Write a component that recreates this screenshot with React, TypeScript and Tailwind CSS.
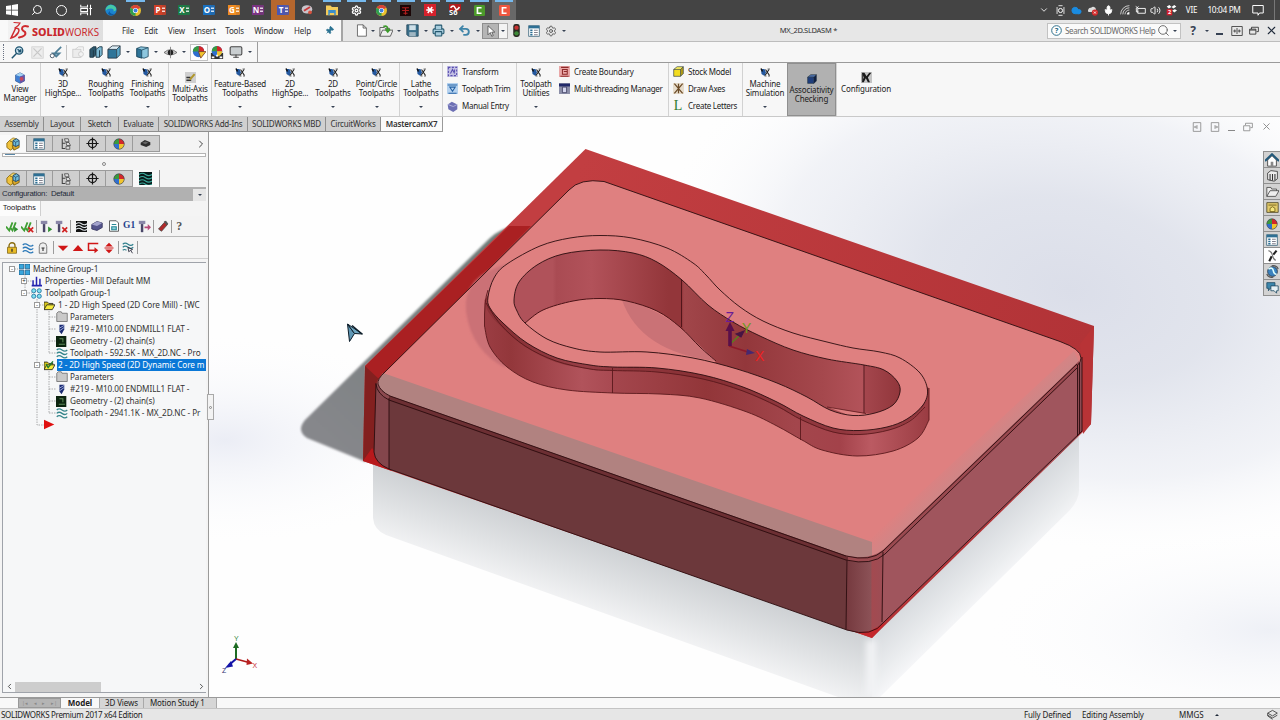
import type { ReactNode } from "react";
import {
  ChevronDown,
  ChevronRight,
  ChevronLeft,
  Cloud,
  Mic,
  Monitor,
  Pin,
  Printer,
  Search,
  Settings,
  Undo2,
  Volume2,
  X,
} from "lucide-react";

type Pt = [number, number];

// Catmull-Rom through the points, emitted as cubic beziers
function smooth(pts: Pt[], closed = false) {
  const n = pts.length;
  const at = (i: number) =>
    closed ? pts[(i + n) % n] : pts[Math.max(0, Math.min(n - 1, i))];
  let d = `M${pts[0][0]} ${pts[0][1]}`;
  const last = closed ? n : n - 1;
  for (let i = 0; i < last; i++) {
    const [p0, p1, p2, p3] = [at(i - 1), at(i), at(i + 1), at(i + 2)];
    d += `C${(p1[0] + (p2[0] - p0[0]) / 6).toFixed(1)} ${(p1[1] + (p2[1] - p0[1]) / 6).toFixed(1)} ${(p2[0] - (p3[0] - p1[0]) / 6).toFixed(1)} ${(p2[1] - (p3[1] - p1[1]) / 6).toFixed(1)} ${p2[0]} ${p2[1]}`;
  }
  return closed ? d + "Z" : d;
}

const ringOuter: Pt[] = [
  [488, 297], [494, 278], [507, 264], [540, 246], [570, 238], [600, 235.5], [632, 238], [667, 248],
  [693, 263], [706, 275], [720, 290], [740, 307], [763, 321], [793, 333], [827, 342], [853, 348],
  [880, 352], [900, 358], [920, 373], [927.5, 390], [923, 405], [907, 419], [887, 427], [860, 430.5],
  [833, 428], [803, 416], [777, 402], [743, 387], [703, 375], [657, 368], [613, 367], [590, 365],
  [557, 358], [527, 343], [503, 323], [490, 308],
];

const ringInner: Pt[] = [
  [514, 300], [519, 282], [537, 265], [563, 254], [600, 250], [633, 253], [657, 262], [682, 280],
  [708, 305], [733, 322], [760, 336], [793, 350], [827, 359], [864, 365], [884, 370], [897, 381],
  [900, 392], [893, 405], [875, 413], [853, 415.5], [830, 410], [807, 397], [777, 383], [737, 369],
  [693, 358], [647, 352], [600, 352], [573, 348], [547, 339], [525, 323], [517, 311],
];

const ringFoot: Pt[] = [
  [484.5, 326], [490, 347], [507, 367], [533, 382], [567, 390], [613, 393], [660, 394], [700, 398],
  [747, 412], [777, 426], [802, 440], [822, 450], [857, 456], [893, 451], [918, 438], [929, 420],
];

const floorEdge: Pt[] = [
  [525, 323], [543, 310], [573, 301], [600, 298.5], [627, 301], [657, 311], [680, 327], [700, 347], [716, 361],
];

const outerPath = smooth(ringOuter, true);
const innerPath = smooth(ringInner, true);

function Scene() {
  return (
    <svg className="absolute inset-0" width="1280" height="580" viewBox="0 117 1280 580">
      <defs>
        <radialGradient id="haze" gradientUnits="userSpaceOnUse" cx="0" cy="0" r="1" gradientTransform="translate(1070 290) rotate(12) scale(420 260)">
          <stop offset="0" stopColor="#dbdee9" />
          <stop offset="0.35" stopColor="#e0e3ec" stopOpacity="0.95" />
          <stop offset="0.7" stopColor="#eceef4" stopOpacity="0.7" />
          <stop offset="1" stopColor="#ffffff" stopOpacity="0" />
        </radialGradient>
        <radialGradient id="haze2" gradientUnits="userSpaceOnUse" cx="0" cy="0" r="1" gradientTransform="translate(225 440) scale(240 110)">
          <stop offset="0" stopColor="#ebedf5" />
          <stop offset="1" stopColor="#ffffff" stopOpacity="0" />
        </radialGradient>
        <radialGradient id="haze3" gradientUnits="userSpaceOnUse" cx="0" cy="0" r="1" gradientTransform="translate(1270 630) scale(300 110)">
          <stop offset="0" stopColor="#eef0f6" />
          <stop offset="1" stopColor="#ffffff" stopOpacity="0" />
        </radialGradient>
        <linearGradient id="reflFront" gradientUnits="userSpaceOnUse" x1="620" y1="548" x2="592" y2="628">
          <stop offset="0" stopColor="#cdd0d3" />
          <stop offset="0.45" stopColor="#e1e3e5" />
          <stop offset="1" stopColor="#fbfbfc" />
        </linearGradient>
        <linearGradient id="reflRight" gradientUnits="userSpaceOnUse" x1="980" y1="530" x2="1022" y2="575">
          <stop offset="0" stopColor="#d6d9dd" />
          <stop offset="0.6" stopColor="#ebedef" />
          <stop offset="1" stopColor="#fbfbfd" />
        </linearGradient>
        <linearGradient id="stock" gradientUnits="userSpaceOnUse" x1="586" y1="150" x2="1090" y2="330">
          <stop offset="0" stopColor="#c23e41" />
          <stop offset="1" stopColor="#b23337" />
        </linearGradient>
        <linearGradient id="wall" gradientUnits="userSpaceOnUse" x1="514" y1="0" x2="900" y2="0">
          <stop offset="0" stopColor="#b0525a" />
          <stop offset="0.1" stopColor="#b0525a" />
          <stop offset="0.11" stopColor="#a94b53" />
          <stop offset="0.2" stopColor="#b2525a" />
          <stop offset="0.4" stopColor="#93363a" />
          <stop offset="0.435" stopColor="#93363a" />
          <stop offset="0.44" stopColor="#a1464a" />
          <stop offset="0.6" stopColor="#93373b" />
          <stop offset="0.8" stopColor="#a5484d" />
          <stop offset="0.905" stopColor="#b3535a" />
          <stop offset="0.91" stopColor="#a4464d" />
          <stop offset="1" stopColor="#91363b" />
        </linearGradient>
        <linearGradient id="side" gradientUnits="userSpaceOnUse" x1="484" y1="0" x2="929" y2="0">
          <stop offset="0" stopColor="#9b3d43" />
          <stop offset="0.06" stopColor="#93373b" />
          <stop offset="0.22" stopColor="#b1535b" />
          <stop offset="0.285" stopColor="#a94a52" />
          <stop offset="0.29" stopColor="#a4464d" />
          <stop offset="0.5" stopColor="#923639" />
          <stop offset="0.7" stopColor="#a3464c" />
          <stop offset="0.8" stopColor="#a3424a" />
          <stop offset="0.87" stopColor="#bb5a62" />
          <stop offset="1" stopColor="#9a3c42" />
        </linearGradient>
        <linearGradient id="corner" gradientUnits="userSpaceOnUse" x1="846" y1="0" x2="884" y2="0">
          <stop offset="0" stopColor="#75393e" />
          <stop offset="0.66" stopColor="#8c5257" />
          <stop offset="0.68" stopColor="#a34a50" />
          <stop offset="1" stopColor="#9c4d55" />
        </linearGradient>
        <linearGradient id="groundShade" gradientUnits="userSpaceOnUse" x1="500" y1="230" x2="320" y2="430">
          <stop offset="0" stopColor="#6f7a77" />
          <stop offset="1" stopColor="#86878b" />
        </linearGradient>
        <linearGradient id="rightBevel" gradientUnits="userSpaceOnUse" x1="965" y1="442" x2="985" y2="462">
          <stop offset="0" stopColor="#df8080" />
          <stop offset="1" stopColor="#c98889" />
        </linearGradient>
        <filter id="soft" x="-10%" y="-10%" width="120%" height="120%">
          <feGaussianBlur stdDeviation="1.3" />
        </filter>
        <filter id="soft2" x="-60%" y="-10%" width="220%" height="120%">
          <feGaussianBlur stdDeviation="3" />
        </filter>
        <clipPath id="pocket">
          <path d={innerPath} />
        </clipPath>
      </defs>

      <rect y="117" width="1280" height="580" fill="#fefefe" />
      <rect y="117" width="1280" height="580" fill="url(#haze)" />
      <rect y="117" width="1280" height="580" fill="url(#haze2)" />
      <rect y="117" width="1280" height="580" fill="url(#haze3)" />

      {/* reflection on the floor */}
      <path d="M373 462V518Q374 530 386 535L838 697H872V630Z" fill="url(#reflFront)" />
      <path d="M872 634V697H880L1068 512Q1079 501 1079 490V432Z" fill="url(#reflRight)" />
      <path d="M866 640H876V697H866Z" fill="#f2f3f5" filter="url(#soft2)" />

      {/* ground shadow */}
      <path d="M530 226Q506 223 490 238L305 420Q296 431 307 438L366 462V366Z" fill="url(#groundShade)" filter="url(#soft)" />

      {/* stock */}
      <path d="M585.500 149L1094 326L1091 424L872 638L363 461L365 366Z" fill="url(#stock)" />
      <path d="M509 226H531L385 373L375 384L365 366Z" fill="#aa2022" />
      <path d="M365 366L380 380L375 460L363 461Z" fill="#83201f" />
      <path d="M363 461L372 448L392 471Z" fill="#b8191c" />
      <path d="M852 631L872 638L886 623Z" fill="#c4262b" />
      <path d="M1094 326L1080 344L1083 434L1091 424Z" fill="#b83336" />

      {/* part sides */}
      <path d="M376 384L389 398V469Q376 463 374 454Z" fill="#84464c" />
      <path d="M389 397L847 558V630L389 469Z" fill="#6c383b" />
      <path d="M846 556L884 550V622Q874 632 860 632Q852 632 846 630Z" fill="url(#corner)" />
      <path d="M883 552L1077.500 366V437L883 623Z" fill="#a0555d" />
      <path d="M1077 366L1082 358V431L1077 437Z" fill="#8d4a52" />

      {/* part top */}
      <path
        d="M385 372L569 190Q580 178 604 181.500L1060 341.500Q1081 349 1081 358Q1081 363 1077 367L885 551Q875 561 846 557L389 397Q374 390 378 380Z"
        fill="#df8080"
      />
      <path d="M868 541L1074 351L1079 362L884 550Q876 557 868 558Z" fill="url(#rightBevel)" />
      <path d="M383 373L872 542V558Q858 560 846 556L390 396Q374 389 380 377Z" fill="#b18280" />
      <path d="M389 395.500L846 555.500V560.500L389 400.500Z" fill="#6c2f33" />
      <path d="M377 382Q379 390 389 395.500V400.500Q379 396 376 385Z" fill="#8c4a4f" />
      <path d="M846 555.500Q870 561 884 549L1079 361L1079 367L885 553Q872 565 846 560.500Z" fill="#9a4a50" />

      {/* cast shade left of the boss */}
      <path d="M507 264Q462 276 466 312Q472 352 506 368L500 320Z" fill="#cb7176" filter="url(#soft)" />

      <g fill="none" stroke="#2a0c0e" strokeWidth="0.9">
        <path d="M569 190Q580 178 604 181.500L1060 341.500Q1081 349 1081 358Q1081 362 1077 366" />
        <path d="M569 190L385 372Q377 379 378 384Q380 391 390 396L846 556Q871 562 883 551L1077 364" />
        <path d="M376 384Q377 394 389 400L846 560Q872 566 885 554L1077 368" />
        <path d="M389 398V469M376 383L374 452Q375 463 389 469L847 630Q872 638 884 622L1082 431V357" />
        <path d="M847 557L846 629M883 552L882 622M1077.500 365V436M1079.500 363V434" />
      </g>

      {/* boss */}
      <path d={smooth(ringFoot) + "L929 388L880 370L613 350L500 280L484.500 300Z"} fill="url(#side)" />
      <path d={outerPath} fill="#7e2a2f" transform="translate(-1.500 4)" opacity="0.5" />
      <path d={outerPath} fill="#df8080" />
      <path d={innerPath} fill="url(#wall)" />
      <g clipPath="url(#pocket)">
        <path d={smooth(floorEdge) + "L700 375H540L510 340Z"} fill="#df8080" />
        <path d="M622 300Q650 305 680 327L716 361Q640 352 622 300Z" fill="#ca7276" />
        <path d={smooth(floorEdge)} fill="none" stroke="#4a1216" />
        <path d="M828 407L864 413.500L874 414L853 417Z" fill="#df8080" />
        <path d="M827 407L866 413.500" stroke="#5a181c" strokeWidth="0.8" />
        <path d="M681.500 278V327M864 364V413" stroke="#4a1216" strokeWidth="0.9" />
      </g>
      <g fill="none" stroke="#2a0c0e" strokeWidth="0.9">
        <path d={outerPath} />
        <path d={innerPath} />
        <path d={"M488 290Q484 300 484.500 326" + smooth(ringFoot).replace("M", "L") + "V388"} stroke="#5a181c" />
        <path
          d={smooth([[486, 303], [501, 325], [525, 346], [556, 361], [590, 369], [613, 370.5], [657, 372], [703, 379], [743, 391], [777, 406], [802, 420], [833, 432], [860, 434.5], [889, 430], [910, 421], [925, 407]])}
          stroke="#5a181c"
        />
        <path d="M612.500 368V393M800.500 417V440" stroke="#5a181c" />
      </g>

      {/* part origin */}
      <g strokeWidth="1.2" fill="none">
        <path d="M729 346L748 352" stroke="#8d1a2a" strokeWidth="1.600" />
        <path d="M729 345L741 334" stroke="#59801b" strokeWidth="1.400" />
        <path d="M747 349L755 353L746 355Z" fill="#47286f" />
        <path d="M736 334L744 331L741 337Z" fill="#481443" stroke="#481443" />
        <path d="M730 346V328" stroke="#5a0f4a" strokeWidth="3.600" />
        <path d="M725.500 331L730 322L734.500 331Z" fill="#5a0f4a" />
      </g>
      <g fontFamily='"Liberation Sans", sans-serif' fontSize="14">
        <text x="725.500" y="321.500" fill="#6a1c96">Z</text>
        <text x="742" y="332.500" fill="#6d9a1e">Y</text>
        <text x="755" y="361" fill="#f0201f">X</text>
      </g>

      {/* view triad */}
      <path d="M236 659V646" stroke="#1d6b22" strokeWidth="2" />
      <path d="M233 648L236 642L239 648Z" fill="#1d6b22" />
      <path d="M236 659L249 662.500" stroke="#b01a1a" strokeWidth="1.800" />
      <path d="M247 658.500L253 663.500L246.500 665Z" fill="#b92222" />
      <path d="M236 659L229 665" stroke="#1414a8" strokeWidth="2" />
      <path d="M231 661L225 668L233 666.500Z" fill="#1414a8" />
      <g fontFamily='"Liberation Sans", sans-serif' fontSize="7">
        <text x="234" y="641" fill="#3a8a3f">Y</text>
        <text x="252.500" y="667.500" fill="#c93030">X</text>
        <text x="222" y="672.500" fill="#303070">Z</text>
      </g>

      {/* mouse pointer */}
      <path d="M347.500 324L354.500 333.500L349.500 341.500Z" fill="#5f97b5" stroke="#0c1c28" strokeWidth="1" />
      <path d="M347.500 324L362.500 334L354.500 333.500Z" fill="#6fa6c0" stroke="#0c1c28" strokeWidth="1" />
      <path d="M352 325.500L362 334" stroke="#0c1c28" strokeWidth="1.500" />
    </svg>
  );
}

function Art({ s = 12, children }: { s?: number; children: ReactNode }) {
  return (
    <svg width={s} height={s} viewBox="0 0 16 16" className="shrink-0">
      {children}
    </svg>
  );
}

const Caret = () => (
  <span className="inline-block border-x-[2px] border-t-[2.5px] border-x-transparent border-t-gray-700" />
);

const Ball = ({ s = 13 }: { s?: number }) => (
  <Art s={s}>
    <circle cx="8" cy="8" r="7" fill="#2f6fd0" />
    <path d="M8 8L8 1A7 7 0 0 1 15 8Z" fill="#d3272b" />
    <path d="M8 8H15A7 7 0 0 1 8 15Z" fill="#f1c42d" />
    <path d="M8 8V1A7 7 0 0 0 1 8Z" fill="#3b9a3d" />
    <circle cx="8" cy="8" r="7" fill="none" stroke="#444" strokeWidth="0.8" />
  </Art>
);

const PartIcon = () => (
  <Art s={14}>
    <path d="M1 7L4 4L8 6V13L5 15L1 12Z" fill="#f0c23c" stroke="#8a6a12" />
    <path d="M4 4L8 1L12 2L8 6Z" fill="#f6d96a" stroke="#8a6a12" strokeWidth="0.800" />
    <path d="M7 10L15 9V12L9 15Z" fill="#dca92a" stroke="#7c600f" />
    <path d="M8 4L12 2L15 4V9L11 11L8 9Z" fill="#6fbcd8" stroke="#246" />
    <path d="M8 4L11 6L15 4M11 6V11" stroke="#246" strokeWidth="0.800" fill="none" />
  </Art>
);
const ListIcon = () => (
  <Art s={12}>
    <rect x="1" y="1" width="14" height="14" fill="#fff" stroke="#2d5b74" />
    <rect x="1" y="1" width="14" height="3.500" fill="#2d6f94" />
    <path d="M3 7H6M3 10H6M3 13H6" stroke="#2d6f94" strokeWidth="2" />
    <path d="M8 7H13M8 10H13M8 13H13" stroke="#556" />
  </Art>
);
const ConfigIcon = () => (
  <Art s={12}>
    <path d="M3 1V14H7M3 7H7" fill="none" stroke="#444" strokeWidth="1.400" />
    <path d="M6 1H11L12 5H7ZM8 6H12L14 10H9ZM8 11H13V15H8Z" fill="#ddd" stroke="#444" />
  </Art>
);
const TargetIcon = () => (
  <Art s={13}>
    <circle cx="8" cy="8" r="5" fill="none" stroke="#151515" strokeWidth="1.500" />
    <path d="M8 0.500V15.500M0.500 8H15.500" stroke="#151515" strokeWidth="1.500" />
  </Art>
);
const WaveIcon = () => (
  <Art s={13}>
    <rect width="16" height="16" fill="#0a1a1a" />
    <path d="M0 3Q4 0 8 3T16 3M0 7Q4 4 8 7T16 7M0 11Q4 8 8 11T16 11M0 15Q4 12 8 15T16 15" fill="none" stroke="#3aa99b" strokeWidth="1.400" />
  </Art>
);
const CubeIcon = ({ a, b, c, s = 13 }: { a: string; b: string; c: string; s?: number }) => (
  <Art s={s}>
    <path d="M1 5L6 1H15L11 5Z" fill={a} />
    <path d="M1 5H11V15H1Z" fill={b} />
    <path d="M11 5L15 1V11L11 15Z" fill={c} />
    <path d="M1 5L6 1H15V11L11 15H1ZM1 5H11V15M11 5L15 1" fill="none" stroke="#22323f" strokeWidth="0.900" />
  </Art>
);
const CamIcon = () => (
  <svg width="11" height="9" viewBox="0 0 22 18">
    <path d="M2 2H9L12 9L9 16L3 12Z" fill="#2459a0" />
    <path d="M2 1L5 7" stroke="#111" strokeWidth="3" />
    <path d="M11 3L19 15M18 3L10 15" stroke="#222" strokeWidth="2.200" />
    <path d="M15 2H20M9 16H13M16 16H20" stroke="#444" strokeWidth="1.500" />
  </svg>
);
const CamConfig = () => (
  <Art s={11}>
    <rect width="16" height="16" fill="#c4c4c4" />
    <path d="M1 1H5L8 6L12 1H15L10 8L13 15H10L7 9L4 15H1L4 8Z" fill="#1b1b1b" />
    <path d="M2 3V13" stroke="#333" strokeWidth="1.500" />
  </Art>
);

function Tile({ bg, letter }: { bg: string; letter: string }) {
  return (
    <svg width="12" height="12" viewBox="0 0 12 12">
      <rect x="4" y="1" width="8" height="10" rx="1" fill={bg} opacity="0.85" />
      <path d="M8 3.500H11V5H8ZM8 6.500H11V8H8Z" fill="#fff" opacity="0.8" />
      <rect x="0" y="1" width="8" height="10" fill={bg} />
      <text x="4" y="8.800" fontSize="8" fontWeight="700" textAnchor="middle" fill="#fff" fontFamily='"Noto Sans", sans-serif'>
        {letter}
      </text>
    </svg>
  );
}

const Chrome = () => (
  <Art s={11}>
    <circle cx="8" cy="8" r="8" fill="#e8c02e" />
    <path d="M8 8L1 4A8 8 0 0 1 15 4Z" fill="#d94436" />
    <path d="M8 8L1 4A8 8 0 0 0 8 16Z" fill="#2f9e50" />
    <circle cx="8" cy="8" r="3.800" fill="#fff" />
    <circle cx="8" cy="8" r="2.900" fill="#3d7fe0" />
  </Art>
);

const taskbar: { icon: ReactNode; open?: boolean; cell?: string }[] = [
  {
    icon: (
      <Art s={12}>
        <path d="M0 2.500L7 1.500V7.500H0ZM8 1.300L16 0V7.500H8ZM0 8.500H7V14.500L0 13.500ZM8 8.500H16V16L8 14.700Z" fill="#fff" />
      </Art>
    ),
  },
  { icon: <Search size={12} className="-scale-x-100 text-white" strokeWidth={2} /> },
  { icon: <span className="size-[11px] rounded-full border-[1.5px] border-white" /> },
  {
    icon: (
      <Art s={12}>
        <path d="M1 1V4H10V1M1 15V12H10V15M1 6H10V10H1ZM14 1V15M12.500 6H16" fill="none" stroke="#fff" strokeWidth="1.400" />
      </Art>
    ),
  },
  {
    icon: (
      <Art s={12}>
        <circle cx="8" cy="8" r="7.500" fill="#1b83d0" />
        <path d="M1 6Q6 -3 14 4Q17 9 11 10Q13 6 8 6Q3 6 1 9Z" fill="#45c8a4" />
        <path d="M6 9Q6 14 13 13Q8 17 4 13Z" fill="#0c5aa5" />
      </Art>
    ),
  },
  { icon: <Chrome />, open: true },
  { icon: <Tile bg="#cf4027" letter="P" /> },
  { icon: <Tile bg="#1d7a45" letter="X" /> },
  { icon: <Tile bg="#1a70bf" letter="O" /> },
  { icon: <Tile bg="#ef8b22" letter="G" /> },
  { icon: <Tile bg="#7b3483" letter="N" /> },
  { icon: <Tile bg="#4a57b5" letter="T" />, cell: "bg-[#b6672e]" },
  {
    icon: (
      <Art s={12}>
        <ellipse cx="8" cy="7" rx="7" ry="5.500" fill="#c9c4ca" />
        <path d="M4 9L12 4" stroke="#c83a3a" strokeWidth="2.500" />
        <circle cx="12" cy="11" r="2.500" fill="#d6503c" />
      </Art>
    ),
  },
  {
    icon: (
      <Art s={12}>
        <path d="M0 2H6L8 4H16V15H0Z" fill="#f4cb5a" />
        <path d="M3 8H13V15H11V12H5V15H3Z" fill="#3b8fcb" />
      </Art>
    ),
    open: true,
  },
  { icon: <Settings size={11} className="text-white" strokeWidth={2.8} />, open: true },
  { icon: <Chrome />, open: true },
  {
    icon: (
      <Art s={11}>
        <rect width="16" height="16" fill="#1a0606" />
        <path d="M3 4H13M3 8H13M5 12H11M8 4V14" stroke="#b01e1e" strokeWidth="1.700" />
      </Art>
    ),
    open: true,
  },
  {
    icon: (
      <Art s={12}>
        <rect width="16" height="16" fill="#d5212c" />
        <path d="M3 8H13M5 4L11 12M11 4L5 12" stroke="#fff" strokeWidth="2" />
      </Art>
    ),
    open: true,
  },
  {
    icon: (
      <Art s={12}>
        <rect y="0" width="16" height="9" fill="#b01c1c" />
        <path d="M2 5Q6 0 8 5T14 4" stroke="#fff" strokeWidth="2" fill="none" />
        <text x="0" y="15" fontSize="10" fontWeight="700" fill="#fff">S6</text>
      </Art>
    ),
    open: true,
  },
  {
    icon: (
      <Art s={11}>
        <rect width="16" height="16" rx="2" fill="#4c9a2a" />
        <path d="M11 4H5V12H11" fill="none" stroke="#fff" strokeWidth="2.400" />
      </Art>
    ),
    open: true,
  },
  {
    icon: (
      <Art s={11}>
        <rect width="16" height="16" rx="2" fill="#f0563f" />
        <path d="M11 4H5V12H11" fill="none" stroke="#fff" strokeWidth="2.400" />
      </Art>
    ),
    open: true,
    cell: "bg-[#686868]",
  },
];

function Taskbar() {
  return (
    <div className="flex h-[20px] shrink-0 justify-between bg-[#444444] text-white">
      <div className="flex">
        {taskbar.map((t, i) => (
          <div key={i} className={`relative flex w-[24.6px] items-center justify-center ${t.cell ?? ""}`}>
            {t.open && <span className="absolute inset-x-[3px] top-0 h-[1.5px] bg-[#76b9ed]" />}
            {t.icon}
          </div>
        ))}
      </div>
      <div className="flex items-center">
        <span className="flex w-[16px] justify-center"><ChevronDown size={10} /></span>
        <span className="flex w-[17px] justify-center">
          <Art s={11}>
            <circle cx="8" cy="8" r="3" fill="none" stroke="#fff" strokeWidth="1.400" />
            <path d="M3 3V13M13 3V13M5 1H11M5 15H11" stroke="#fff" strokeWidth="1.200" />
          </Art>
        </span>
        <span className="flex w-[15px] justify-center"><Cloud size={11} fill="#1a8be0" stroke="#1a8be0" /></span>
        <span className="flex w-[16px] justify-center">
          <Art s={11}>
            <path d="M2 10A4 4 0 0 1 6 4A4 4 0 0 1 13 6V10Z" fill="#ddd" />
            <circle cx="11.500" cy="11" r="4.500" fill="#d12b2b" />
            <path d="M10 9.500L13 12.500M13 9.500L10 12.500" stroke="#fff" strokeWidth="1.200" />
          </Art>
        </span>
        <span className="flex w-[16px] justify-center"><Mic size={11} fill="#fff" /></span>
        <span className="flex w-[17px] justify-center">
          <Art s={10}>
            <path d="M1 15A14 14 0 0 1 15 1M4.500 15A10.500 10.500 0 0 1 15 4.500M8 15A7 7 0 0 1 15 8" fill="none" stroke="#ddd" strokeWidth="1.400" />
            <path d="M11 15A4 4 0 0 1 15 11V15Z" fill="#fff" />
          </Art>
        </span>
        <span className="flex w-[15px] justify-center">
          <Art s={11}>
            <path d="M4 5H15V12H4ZM1 2L5 5M5 2L1 6M2 6V10H5" fill="none" stroke="#fff" strokeWidth="1.300" />
          </Art>
        </span>
        <span className="flex w-[15px] justify-center"><Volume2 size={11} /></span>
        <span className="flex w-[17px] justify-center">
          <Art s={11}>
            <path d="M1 2L5 0L8 3L4 5ZM8 3L12 0L15 2L11 5ZM9 8L13 6L16 8L12 11Z" fill="#fff" />
            <rect x="1" y="6" width="8" height="9" fill="#d3202d" />
            <text x="3" y="13.500" fontSize="8" fill="#fff" fontWeight="700">2</text>
          </Art>
        </span>
        <span className="w-[23px] text-center text-[8px] tracking-[-0.2px]">VIE</span>
        <span className="w-[42px] text-center text-[8.3px] tracking-[-0.35px]">10:04 PM</span>
        <span className="flex w-[26px] justify-center">
          <Art s={12}>
            <path d="M1 2H15V12H10L8 15V12H1Z" fill="none" stroke="#fff" strokeWidth="1.300" />
          </Art>
        </span>
        <span className="ml-[3px] h-full w-[6px] border-l border-[#777]" />
      </div>
    </div>
  );
}

function Logo() {
  return (
    <div className="ml-[8px] flex h-full w-[95px] items-center bg-linear-to-r from-[#f2f2f2] to-[#dfdfdf]">
      <svg width="95" height="20" viewBox="8 21 95 20">
        <g fill="none" stroke="#cf2a2e" strokeLinecap="round">
          <path d="M14 22.500L20 23Q19 25.500 15.500 27.500" strokeWidth="1.200" />
          <path d="M15 28Q21 28 18 33Q15.500 37 11 38L15.500 28.500" strokeWidth="1.500" />
          <path d="M28 26.500Q22 25 22 29Q22.500 31 25 32Q27 36 19 37.500" strokeWidth="2" />
        </g>
        <g fontFamily='"Noto Sans", sans-serif' fontSize="10.800" fill="#c9282d">
          <text x="32" y="36.200" fontWeight="800" textLength="33" lengthAdjust="spacingAndGlyphs">SOLID</text>
          <text x="65" y="36.200" textLength="34" lengthAdjust="spacingAndGlyphs">WORKS</text>
        </g>
      </svg>
    </div>
  );
}

const menus = [
  ["File", "w-[24px]"],
  ["Edit", "w-[22px]"],
  ["View", "w-[29px]"],
  ["Insert", "w-[28px]"],
  ["Tools", "w-[31px]"],
  ["Window", "w-[38px]"],
  ["Help", "w-[29px]"],
];

function TitleBar() {
  return (
    <div className="flex h-[22px] shrink-0 border-b border-[#bdbdbd] bg-[#e7e7e7] text-[8px] text-[#303030]">
      <div className="flex w-[343px] shrink-0 items-center border-r-2 border-[#a5a5a5] bg-[#f9f9f9]">
        <Logo />
        <div className="ml-[13px] flex">
          {menus.map(([m, w]) => (
            <span key={m} className={`${w} text-center tracking-[-0.15px]`}>{m}</span>
          ))}
        </div>
        <span className="flex w-[30px] justify-center">
          <Pin size={9} fill="#2b7392" className="rotate-45 text-[#2b7392]" />
        </span>
      </div>
      <div className="flex items-center">
        <span className="ml-[10px] flex w-[16px] justify-center">
          <Art s={13}><path d="M3 1H10L14 5V15H3ZM10 1V5H14" fill="#fff" stroke="#555" /></Art>
        </span>
        <span className="flex w-[8px] justify-center"><Caret /></span>
        <span className="flex w-[18px] justify-center">
          <Art s={14}>
            <path d="M1 14V4H6L7 5H12V7M1 14L4 7H16L13 14Z" fill="#eee" stroke="#555" />
            <path d="M5 3Q9 1 10 5V8M7.500 6L10 9L12.500 6" fill="none" stroke="#3c9a2b" strokeWidth="2" />
          </Art>
        </span>
        <span className="flex w-[8px] justify-center"><Caret /></span>
        <span className="flex w-[19px] justify-center">
          <Art s={13}>
            <path d="M1 1H15V15H3L1 13Z" fill="#3a6f8a" stroke="#24485b" />
            <rect x="4" y="1.500" width="8" height="6" fill="#cfe0e8" />
            <rect x="4" y="10" width="8" height="5" fill="#9fb6c2" />
          </Art>
        </span>
        <span className="flex w-[7px] justify-center"><Caret /></span>
        <span className="flex w-[19px] justify-center"><Printer size={13} className="text-[#24586f]" fill="#a8cddd" /></span>
        <span className="flex w-[7px] justify-center"><Caret /></span>
        <span className="flex w-[19px] justify-center"><Undo2 size={13} className="text-[#3e84a8]" strokeWidth={3.4} /></span>
        <span className="flex w-[7px] justify-center"><Caret /></span>
        <span className="ml-[1px] flex h-[16px] w-[17px] items-center justify-center border border-[#8e8e8e] bg-[#b5b5b5]">
          <Art s={12}><path d="M4 1V13L7 10L9 15L11 14L9 9.500H13Z" fill="#fff" stroke="#333" strokeWidth="0.900" /></Art>
        </span>
        <span className="flex h-[16px] w-[9px] items-center justify-center border border-l-0 border-[#b0b0b0] bg-[#f4f4f4]"><Caret /></span>
        <span className="flex w-[17px] justify-center">
          <Art s={13}>
            <rect x="4" y="0" width="8" height="16" rx="3" fill="#2a2a22" />
            <circle cx="8" cy="4.500" r="2.700" fill="#c73232" />
            <circle cx="8" cy="11.500" r="2.700" fill="#3d8a38" />
          </Art>
        </span>
        <span className="flex w-[17px] justify-center"><ListIcon /></span>
        <span className="flex w-[17px] justify-center"><Settings size={12} className="text-[#555]" strokeWidth={1.8} /></span>
        <span className="flex w-[9px] justify-center"><Caret /></span>
      </div>
      <div className="flex flex-1 items-center justify-end">
        <span className="mr-[210px] text-[7.5px] tracking-[-0.28px]">MX_2D.SLDASM *</span>
        <div className="flex h-[16px] w-[134px] shrink-0 items-center border border-[#c2c2c2] bg-[#fafafa] text-[#6c6c6c]">
          <svg width="11" height="11" viewBox="0 0 16 16" className="ml-[3px]">
            <circle cx="8" cy="8" r="7" fill="#fff" stroke="#276a86" strokeWidth="1.400" />
            <text x="8" y="12" textAnchor="middle" fontSize="11" fontWeight="700" fill="#276a86">?</text>
          </svg>
          <span className="ml-[3px] flex-1 whitespace-nowrap text-[8px] tracking-[-0.36px]">Search SOLIDWORKS Help</span>
          <Search size={13} strokeWidth={1.8} />
          <span className="flex w-[10px] justify-center"><Caret /></span>
        </div>
        <span className="flex w-[24px] justify-center text-[12px] font-bold text-gray-700">?</span>
        <Caret />
        <span className="ml-[7px] mt-[6px] h-[2px] w-[7px] bg-gray-700" />
        <span className="ml-[8px] flex">
          <Art s={12}>
            <path d="M1 2H15V14H1ZM8 4V12M3 8H7M9 8H13M5 6V10M11 6V10" fill="none" stroke="#444" strokeWidth="1.200" />
          </Art>
        </span>
        <span className="ml-[6px] flex">
          <Art s={10}><path d="M4 5V2H15V9H12M1 5H11V13H1ZM1 6.500H11" fill="none" stroke="#333" strokeWidth="1.400" /></Art>
        </span>
        <span className="mr-[2px] ml-[6px] flex"><X size={13} className="text-gray-800" /></span>
      </div>
    </div>
  );
}

function ViewBar() {
  return (
    <div className="flex h-[20px] shrink-0 bg-[#f7f7f7]">
      <div className="flex w-[258px] items-center border-r border-[#9c9c9c]">
        <span className="ml-[3px] h-[16px] border-l border-dotted border-gray-500" />
        <span className="flex w-[27px] justify-center">
          <Art s={13}>
            <circle cx="10" cy="5.500" r="4.500" fill="#cfe6f2" stroke="#1f5470" strokeWidth="1.600" />
            <path d="M7 9L1 15M8 4L12 7M12 4V7H9" stroke="#1f5470" strokeWidth="1.800" fill="none" />
          </Art>
        </span>
        <span className="flex w-[12px] justify-center opacity-50">
          <Art s={13}>
            <rect x="1" y="1" width="14" height="14" fill="#e4e4e4" stroke="#aaa" />
            <path d="M3 3L13 13M13 3L3 13" stroke="#999" strokeWidth="1.500" />
          </Art>
        </span>
        <span className="ml-[5px] flex w-[14px] justify-center">
          <Art s={13}>
            <path d="M15 1L7 9M9 13L5 9H13Z" stroke="#4f7f97" strokeWidth="2" fill="#8bbad0" />
            <circle cx="4" cy="12" r="2.500" fill="#fff" stroke="#345" />
          </Art>
        </span>
        <span className="mx-[4px] h-[15px] w-px bg-[#c4c4c4]" />
        <span className="flex w-[14px] justify-center opacity-40">
          <Art s={13}>
            <rect x="1" y="4" width="10" height="10" fill="#ddd" stroke="#888" />
            <circle cx="11" cy="10" r="3" fill="#eee" stroke="#888" />
            <path d="M4 4L8 1H14V6" fill="none" stroke="#888" />
          </Art>
        </span>
        <span className="ml-[4px] flex w-[14px] justify-center">
          <Art s={14}>
            <path d="M1 5L5 2H8V11L5 14H1Z" fill="#2d566b" stroke="#1c3644" />
            <path d="M8 5L12 2H15V11L12 14H8Z" fill="#7db9d3" stroke="#1c3644" />
            <path d="M5 6V14M12 6V14" stroke="#1c3644" />
          </Art>
        </span>
        <span className="ml-[3px] flex w-[16px] justify-center"><CubeIcon a="#dfeef5" b="#2f7599" c="#5aa6c8" s={14} /></span>
        <span className="flex w-[12px] justify-center"><Caret /></span>
        <span className="flex w-[16px] justify-center">
          <Art s={13}>
            <path d="M1 3L6 1L15 2V13L10 15L1 13Z" fill="#8cc6de" stroke="#1f4a60" />
            <path d="M1 3L7 5V15L1 13Z" fill="#2f7599" stroke="#1f4a60" />
            <path d="M7 5L15 2" stroke="#1f4a60" />
          </Art>
        </span>
        <span className="flex w-[12px] justify-center"><Caret /></span>
        <span className="flex w-[16px] justify-center">
          <Art s={13}>
            <path d="M0 8Q8 1 16 8Q8 14 0 8Z" fill="#ccc" stroke="#555" strokeWidth="0.900" />
            <circle cx="8" cy="8" r="3.400" fill="#222" />
            <path d="M8 1V15" stroke="#777" />
          </Art>
        </span>
        <span className="flex w-[12px] justify-center"><Caret /></span>
        <span className="flex h-[17px] w-[18px] items-center justify-center border border-[#c2c2c2] bg-white">
          <Art s={14}>
            <circle cx="7.500" cy="7.500" r="6.500" fill="#2f6fd0" />
            <path d="M7.500 7.500V1A6.500 6.500 0 0 1 14 7.500Z" fill="#d3272b" />
            <path d="M7.500 7.500V1A6.500 6.500 0 0 0 1 7.500Z" fill="#3b9a3d" />
            <path d="M7.500 7.500H16L10 15Z" fill="#f1c42d" stroke="#6b2a20" strokeWidth="0.800" />
          </Art>
        </span>
        <span className="flex w-[18px] justify-center">
          <Art s={14}>
            <path d="M1 16V9L15 9V16Z" fill="#333" />
            <circle cx="8" cy="7" r="6" fill="#2f6fd0" />
            <path d="M8 7V1A6 6 0 0 1 14 7Z" fill="#d3272b" />
            <path d="M8 7V1A6 6 0 0 0 2 7Z" fill="#3b9a3d" />
            <path d="M8 7H14A6 6 0 0 1 8 13Z" fill="#f1c42d" />
            <path d="M2 14H5M7 12H9M11 14H14" stroke="#fff" strokeWidth="2" />
          </Art>
        </span>
        <span className="flex w-[19px] justify-center"><Monitor size={14} fill="#c9ced0" className="text-[#444]" strokeWidth={1.8} /></span>
        <span className="flex w-[10px] justify-center"><Caret /></span>
      </div>
    </div>
  );
}

function BigButton({
  lines,
  w,
  icon,
  caret = true,
  className = "",
}: {
  lines: string[];
  w: string;
  icon?: ReactNode;
  caret?: boolean;
  className?: string;
}) {
  return (
    <div className={`flex h-full shrink-0 flex-col items-center whitespace-nowrap ${w} ${caret ? "pt-[4px]" : "pt-[9px]"} ${className}`}>
      <div className="flex h-[11px] items-center">{icon ?? <CamIcon />}</div>
      <div className="mt-[1px] text-center text-[8px] leading-[9px] tracking-[-0.15px]">
        {lines.map((l) => (
          <div key={l}>{l}</div>
        ))}
      </div>
      {caret && <span className="mt-[9px] flex"><Caret /></span>}
    </div>
  );
}

const Sep = () => <span className="h-full w-px shrink-0 bg-[#d2d2d2]" />;

function SmallList({ w, items }: { w: string; items: [ReactNode, string][] }) {
  return (
    <div className={`flex h-full flex-col ${w}`}>
      {items.map(([icon, label]) => (
        <div key={label} className="flex h-[17.3px] items-center pl-[3px] text-[8px] tracking-[-0.26px] whitespace-nowrap">
          <span className="flex w-[12px] justify-center">{icon}</span>
          <span className="ml-[4px]">{label}</span>
        </div>
      ))}
    </div>
  );
}

function Ribbon() {
  return (
    <div className="flex h-[55px] shrink-0 border-y border-t-[#9a9a9a] border-b-[#c9c9c9] bg-[#f7f7f7] text-[#222]">
      <BigButton
        w="w-[40px]"
        caret={false}
        lines={["View", "Manager"]}
        icon={
          <Art s={12}>
            <path d="M2 4L8 1L14 4V12L8 15L2 12Z" fill="#3f7fd2" stroke="#31508c" strokeWidth="0.800" />
            <path d="M2 4L8 1L14 4L8 6Z" fill="#a5d2f0" />
            <path d="M8 6L14 4V12L8 15Z" fill="#6a55a8" />
            <circle cx="10" cy="9" r="2.500" fill="#c9485a" />
          </Art>
        }
      />
      <Sep />
      <BigButton w="w-[44px]" lines={["3D", "HighSpe..."]} />
      <BigButton w="w-[42px]" lines={["Roughing", "Toolpaths"]} />
      <BigButton w="w-[41px]" lines={["Finishing", "Toolpaths"]} />
      <Sep />
      <BigButton
        w="w-[42px]"
        caret={false}
        lines={["Multi-Axis", "Toolpaths"]}
        icon={
          <Art s={11}>
            <rect width="16" height="16" fill="#cfcfcf" />
            <path d="M2 8H8M2 12H9" stroke="#333" strokeWidth="2" />
            <path d="M7 11L14 3" stroke="#b0962a" strokeWidth="3" />
          </Art>
        }
      />
      <Sep />
      <BigButton w="w-[56px]" lines={["Feature-Based", "Toolpaths"]} className="tracking-tighter" />
      <BigButton w="w-[44px]" lines={["2D", "HighSpe..."]} />
      <BigButton w="w-[42px]" lines={["2D", "Toolpaths"]} />
      <BigButton w="w-[45px]" lines={["Point/Circle", "Toolpaths"]} />
      <Sep />
      <BigButton w="w-[42px]" lines={["Lathe", "Toolpaths"]} />
      <Sep />
      <SmallList
        w="w-[73px]"
        items={[
          [
            <Art s={11}>
              <rect width="16" height="16" fill="#c3c0e4" />
              <path d="M2 2H14V14H2Z" stroke="#5a4fb0" strokeDasharray="3 2" fill="none" strokeWidth="1.500" />
              <path d="M5 11L8 5L11 11M11 5V9" stroke="#5a4fb0" strokeWidth="1.500" fill="none" />
            </Art>,
            "Transform",
          ],
          [
            <Art s={11}>
              <rect width="16" height="16" fill="#b5d2ef" />
              <path d="M1 3H15M4 6H12L8 12ZM2 15H14" stroke="#2562a5" strokeWidth="1.500" fill="none" />
            </Art>,
            "Toolpath Trim",
          ],
          [<Art s={11}><path d="M1 5L7 1L15 5V12L9 16L2 12Z" fill="#6c6fb4" /><path d="M1 5L9 8L15 5" stroke="#c5c6ea" fill="none" /></Art>, "Manual Entry"],
        ]}
      />
      <Sep />
      <BigButton w="w-[38px]" lines={["Toolpath", "Utilities"]} />
      <SmallList
        w="w-[113px]"
        items={[
          [
            <Art s={11}>
              <rect width="16" height="16" fill="#e9a7a7" />
              <path d="M3 2H14M5 5H12V12H5ZM7 8H12M2 15H14" stroke="#8d2a2a" strokeWidth="1.500" fill="none" />
            </Art>,
            "Create Boundary",
          ],
          [
            <Art s={11}>
              <rect width="16" height="16" fill="#8c8fa8" />
              <rect y="1" width="16" height="4" fill="#222a6a" />
              <path d="M5 6H11V14H5Z" fill="#d4d6ee" stroke="#2c2c50" />
            </Art>,
            "Multi-threading Manager",
          ],
        ]}
      />
      <Sep />
      <SmallList
        w="w-[73px]"
        items={[
          [<CubeIcon s={11} a="#f9ee5c" b="#f2dc1f" c="#b7a013" />, "Stock Model"],
          [
            <Art s={11}>
              <rect width="16" height="16" fill="#e6dccb" />
              <path d="M2 1L14 15M14 1L2 15M8 1V15" stroke="#6b4a26" strokeWidth="1.800" />
            </Art>,
            "Draw Axes",
          ],
          [<span className="font-['Liberation_Serif',serif] text-[14px] leading-none text-[#2c7a2c]">L</span>, "Create Letters"],
        ]}
      />
      <Sep />
      <BigButton w="w-[44px]" lines={["Machine", "Simulation"]} />
      <BigButton
        w="w-[49px]"
        caret={false}
        lines={["Associativity", "Checking"]}
        className="border border-[#8f8f8f] bg-[#b1b1b1]"
        icon={<CubeIcon s={10} a="#4b6ea8" b="#1f3e7c" c="#0e1e44" />}
      />
      <Sep />
      <BigButton w="w-[58px]" caret={false} lines={["Configuration"]} icon={<CamConfig />} />
    </div>
  );
}

const docTabs = [
  ["Assembly", "w-[44px]"],
  ["Layout", "w-[37px]"],
  ["Sketch", "w-[38px]"],
  ["Evaluate", "w-[40px]"],
  ["SOLIDWORKS Add-Ins", "w-[89px]"],
  ["SOLIDWORKS MBD", "w-[78px]"],
  ["CircuitWorks", "w-[55px]"],
];

function TabRow() {
  return (
    <div className="relative flex h-[15px] justify-between">
      <div className="flex text-[8px] leading-[14px] text-[#333]">
        {docTabs.map(([t, w]) => (
          <span key={t} className={`${w} border-r border-b border-[#8f8f8f] bg-[#d0d0d0] text-center whitespace-nowrap tracking-[-0.2px]`}>
            {t}
          </span>
        ))}
        <span className="w-[62px] border-r border-b border-[#9a9a9a] bg-[#fbfbfb] text-center font-semibold tracking-[-0.15px]">MastercamX7</span>
      </div>
      <div className="mr-[8px] flex items-end gap-[8px] text-[#888]">
        <Art s={10}><path d="M2 1H14V15H2ZM8 5V11M8 8H4M6 6L4 8L6 10" fill="none" stroke="#888" strokeWidth="1.300" /></Art>
        <Art s={10}><path d="M2 1H14V15H2ZM8 5V11M8 8H12M10 6L12 8L10 10" fill="none" stroke="#888" strokeWidth="1.300" /></Art>
        <span className="mb-px h-[1.5px] w-[7px] bg-[#888]" />
        <Art s={10}><path d="M4 5V2H15V9H12M1 6H11V14H1Z" fill="none" stroke="#888" strokeWidth="1.300" /></Art>
        <X size={11} />
      </div>
    </div>
  );
}

function PanelTabs({ active, last }: { active: number; last: ReactNode }) {
  const icons = [<PartIcon />, <ListIcon />, <ConfigIcon />, <TargetIcon />, <Ball s={12} />, last];
  return (
    <div className="flex h-[17px] shrink-0 items-stretch">
      {icons.map((icon, i) => (
        <span
          key={i}
          className={`flex w-[26.6px] items-center justify-center border-r border-[#9b9b9b] ${i === active ? "bg-[#f9f9f9]" : "border-y bg-[#cfcfcf]"}`}
        >
          {icon}
        </span>
      ))}
    </div>
  );
}

const Check = ({ mark }: { mark: ReactNode }) => (
  <Art s={13}>
    <path d="M0 8L4 13L8 3M5 9L8 13L12 3" stroke="#3f9e33" strokeWidth="2.200" fill="none" />
    {mark}
  </Art>
);
const Mill = ({ mark }: { mark: ReactNode }) => (
  <Art s={13}>
    <path d="M1 1H9V5H1Z" fill="#8a86a8" />
    <path d="M3.500 5H6.500V15H3.500Z" fill="#4a4668" />
    {mark}
  </Art>
);
const go = <path d="M10 8L15 11.500L10 15Z" fill="#2f8f2f" />;
const no = <path d="M9 9L15 15M15 9L9 15" stroke="#d02222" strokeWidth="2" />;
const Bar = () => <span className="h-[13px] w-px shrink-0 bg-[#9c9c9c]" />;
const Waves = ({ s = 12, color = "#2b78b8" }: { s?: number; color?: string }) => (
  <Art s={s}>
    <path d="M1 4Q4 1 8 4T15 4M1 8.500Q4 5.500 8 8.500T15 8.500M1 13Q4 10 8 13T15 13" fill="none" stroke={color} strokeWidth="1.700" />
  </Art>
);

function PanelTools() {
  return (
    <>
      <div className="flex h-[21px] shrink-0 items-center gap-[2px] border-b border-[#b9b9b9] bg-[#f3f3f3] pl-[6px]">
        <Check mark={go} />
        <Check mark={no} />
        <Bar />
        <span className="ml-[1px] flex"><Mill mark={go} /></span>
        <Mill mark={no} />
        <Bar />
        <span className="ml-[3px] flex"><Art s={11}><rect width="16" height="16" fill="#111" /><path d="M0 4Q4 1 8 4T16 4M0 8Q4 5 8 8T16 8M0 12Q4 9 8 12T16 12" stroke="#dfe6ea" fill="none" strokeWidth="1.500" /></Art></span>
        <span className="ml-[2px] flex">
          <Art s={12}>
            <path d="M1 6L8 2L15 4V10L8 14L1 12Z" fill="#55558c" stroke="#2c2c55" />
            <path d="M1 6L8 2L15 4L8 8Z" fill="#a3a3cc" />
          </Art>
        </span>
        <span className="ml-[3px] flex">
          <Art s={12}>
            <path d="M2 1H11L14 4V15H2Z" fill="#fff" stroke="#333" />
            <path d="M5 6H11M5 9H11V13H5Z" stroke="#2a8a98" fill="#8fd0d8" strokeWidth="1.500" />
          </Art>
        </span>
        <span className="ml-[1px] font-['Liberation_Serif',serif] text-[9.5px] font-bold leading-none text-[#1f3f8c]">G1</span>
        <span className="ml-[1px] flex"><Mill mark={<path d="M8 8H12V5L16 9L12 13V10H8Z" fill="#b84a78" />} /></span>
        <Bar />
        <span className="ml-[1px] flex"><Art s={12}><path d="M2 12L10 3L14 6L6 15Z" fill="#b02a2a" stroke="#444" /><path d="M9 2L12 1L15 5L13 7Z" fill="#555" /></Art></span>
        <span className="flex"><Bar /></span>
        <span className="ml-[2px] font-['Liberation_Serif',serif] text-[12px] font-bold leading-none text-[#555]">?</span>
      </div>
      <div className="flex h-[21px] shrink-0 items-center pl-[6px]">
        <Art s={12}><path d="M4 8V5A4 4 0 0 1 12 5V8" fill="none" stroke="#8a6d10" strokeWidth="1.800" /><path d="M2 7H14V15H2Z" fill="#e8bb26" stroke="#7c6210" /><path d="M8 9V13" stroke="#333" strokeWidth="1.800" /></Art>
        <span className="ml-[4px] flex"><Waves /></span>
        <span className="ml-[3px] flex"><Art s={12}><path d="M3 15V6A5 5 0 0 1 13 6V15Z" fill="#eee" stroke="#555" /><path d="M8 8V12M6 8H10" stroke="#333" strokeWidth="1.500" /></Art></span>
        <span className="ml-[4px] flex"><Bar /></span>
        <span className="ml-[3px] flex"><Art s={12}><path d="M1 5H15L8 12Z" fill="#d01616" /></Art></span>
        <span className="ml-[3px] flex"><Art s={12}><path d="M1 12H15L8 4Z" fill="#d01616" /></Art></span>
        <span className="ml-[3px] flex"><Art s={12}><path d="M15 2H2V11H11" fill="none" stroke="#d01616" strokeWidth="2" /><path d="M10 7L15 11L10 15Z" fill="#d01616" /></Art></span>
        <span className="ml-[4px] flex"><Art s={12}><path d="M8 1L13 6H3ZM8 15L13 10H3ZM2 7.300H14V8.700H2Z" fill="#d01616" /></Art></span>
        <span className="mx-[3px] flex"><Bar /></span>
        <Art s={12}>
          <path d="M1 3Q4 0 8 3T15 3M1 7Q4 4 8 7T15 7M1 11Q3 9 6 11" fill="none" stroke="#2f7f8c" strokeWidth="1.500" />
          <path d="M8 7L14 10L11.500 11L14 15M8 7L9 13L11.500 11" stroke="#334" fill="none" strokeWidth="1.200" />
        </Art>
        <span className="ml-[3px] flex"><Bar /></span>
      </div>
    </>
  );
}

const squares = (
  <Art s={11}>
    <path d="M0 0H7V7H0ZM9 0H16V7H9ZM0 9H7V16H0ZM9 9H16V16H9Z" fill="#39a6dc" stroke="#15507c" />
  </Art>
);
const bars = <Art s={11}><path d="M3 6V14M8 1V14M13 4V14M1 14H16" stroke="#2424b0" strokeWidth="2.200" /></Art>;
const dots = (
  <Art s={11}>
    {[[4, 4], [12, 4], [4, 12], [12, 12]].map(([x, y]) => (
      <circle key={`${x}${y}`} cx={x} cy={y} r="3" fill="#7fe0f0" stroke="#1c6f9c" strokeWidth="1.200" />
    ))}
  </Art>
);
const folder = (
  <Art s={11}>
    <path d="M0 14V3H5L7 5H13V7" fill="#d8c81c" stroke="#222" strokeWidth="1.200" />
    <path d="M0 14L4 7H16L12 14Z" fill="#f5ea3a" stroke="#222" strokeWidth="1.200" />
  </Art>
);
const folderOn = (
  <Art s={11}>
    <path d="M0 14V3H5L7 5H13V7" fill="#d8c81c" stroke="#222" strokeWidth="1.200" />
    <path d="M0 14L4 7H16L12 14Z" fill="#f5ea3a" stroke="#222" strokeWidth="1.200" />
    <path d="M3 6L6 11L13 2" fill="none" stroke="#1f7a2c" strokeWidth="2" />
  </Art>
);
const params = <Art s={12}><path d="M1 14V3L3 1H7L8 3H15V14Z" fill="#c9c9c9" stroke="#666" /></Art>;
const tool = <Art s={11}><path d="M5 1H12V8L8 15L5 11Z" fill="#1b2b72" /><path d="M5 6L12 2M5 10L12 5" stroke="#b6c4f0" strokeWidth="1.200" /></Art>;
const geo = <Art s={11}><rect width="15" height="16" fill="#0c2410" /><path d="M5 4H10V9M4 12H13" stroke="#5c8a58" strokeWidth="1.500" fill="none" /></Art>;
const path = <Waves color="#35868c" />;

type Row = { icon: ReactNode; label: string; pad: string; box?: string; on?: boolean };
const rows: Row[] = [
  { icon: squares, label: "Machine Group-1", pad: "pl-[6px]", box: "-" },
  { icon: bars, label: "Properties - Mill Default MM", pad: "pl-[18px]", box: "+" },
  { icon: dots, label: "Toolpath Group-1", pad: "pl-[18px]", box: "-" },
  { icon: folder, label: "1 - 2D High Speed (2D Core Mill) - [WC", pad: "pl-[31px]", box: "-" },
  { icon: params, label: "Parameters", pad: "pl-[43px]" },
  { icon: tool, label: "#219 - M10.00 ENDMILL1 FLAT -", pad: "pl-[43px]" },
  { icon: geo, label: "Geometry - (2) chain(s)", pad: "pl-[43px]" },
  { icon: path, label: "Toolpath - 592.5K - MX_2D.NC - Pro", pad: "pl-[43px]" },
  { icon: folderOn, label: "2 - 2D High Speed (2D Dynamic Core m", pad: "pl-[31px]", box: "-", on: true },
  { icon: params, label: "Parameters", pad: "pl-[43px]" },
  { icon: tool, label: "#219 - M10.00 ENDMILL1 FLAT -", pad: "pl-[43px]" },
  { icon: geo, label: "Geometry - (2) chain(s)", pad: "pl-[43px]" },
  { icon: path, label: "Toolpath - 2941.1K - MX_2D.NC - Pr", pad: "pl-[43px]" },
];

function Tree() {
  return (
    <div className="relative mt-[3px] ml-[2px] flex h-[431px] w-[204px] flex-col overflow-hidden border-t border-b border-l border-[#9fa3aa] bg-[#f6f7f8]">
      <svg className="absolute inset-0" width="204" height="180" viewBox="3 262 204 180">
        <path d="M12 268H18M25 273V292H32M37 298V424H44M37 304H44M37 364H44M49 310V352M49 370V412M49 316H56M49 328H56M49 340H56M49 352H56M49 376H56M49 388H56M49 400H56M49 412H56M25 280H32" fill="none" stroke="#9a9a9a" strokeWidth="0.800" strokeDasharray="1.500 1" />
      </svg>
      <div className="relative">
        {rows.map((r, i) => (
          <div key={i} className={`flex h-[12.03px] items-center ${r.pad}`}>
            <span className="flex w-[9px] shrink-0">
              {r.box && (
                <span className="flex size-[6px] items-center justify-center border border-[#9a9a9a] bg-white text-[6px] leading-none">{r.box}</span>
              )}
            </span>
            <span className="flex w-[13px] shrink-0 justify-center">{r.icon}</span>
            <span
              className={`ml-[1px] h-[12px] flex-1 pl-px text-[8.2px] leading-[12px] tracking-[-0.08px] whitespace-nowrap ${r.on ? "bg-[#0a78d7] text-white" : "text-[#333]"}`}
            >
              {r.label}
            </span>
          </div>
        ))}
        <div className="h-[12px] pl-[41px]">
          <Art s={11}><path d="M0 1L15 8L0 15Z" fill="#e01010" /></Art>
        </div>
      </div>
      <div className="mt-auto flex h-[11px] shrink-0 items-center">
        <ChevronLeft size={9} className="ml-[2px]" />
        <span className="ml-px h-[10px] w-[86px] bg-[#cdcdcd]" />
        <ChevronRight size={9} className="ml-auto" />
      </div>
    </div>
  );
}

function LeftPanel() {
  return (
    <div className="relative flex w-[209px] shrink-0 flex-col border-r border-[#9a9a9a] bg-[#f4f4f4]">
      <div className="mt-[3px] flex items-center">
        <PanelTabs
          active={0}
          last={<Art s={11}><path d="M1 7L7 3L15 6V10L9 13L1 10Z" fill="#2f2f2f" /><path d="M3 7L8 5L12 6.500L8 9Z" fill="#666" /></Art>}
        />
        <ChevronRight size={12} className="mr-[1px] ml-auto text-[#444]" />
      </div>
      <div className="mt-[1px] ml-[2px] h-[4px] w-[204px] border border-[#b4b4b4] bg-white">
        <div className="ml-[2px] h-px w-[10px] bg-[#5a86a5]" />
      </div>
      <div className="flex h-[13px] shrink-0 items-center justify-center">
        <span className="size-[4px] rounded-full border border-[#888]" />
      </div>
      <PanelTabs active={5} last={<WaveIcon />} />
      <div className="flex h-[14px] w-[206px] shrink-0 items-center justify-between bg-[#b1b1b1] font-['Liberation_Sans',sans-serif] text-[7.8px] text-gray-800">
        <span className="ml-[2px] tracking-[-0.25px]">Configuration:&nbsp; Default</span>
        <span className="mt-[2px] flex h-[12px] w-[13px] items-center justify-center bg-[#e6e6e6]"><Caret /></span>
      </div>
      <div className="flex h-[15px] shrink-0 items-stretch">
        <span className="w-[41px] border-r border-[#cfcfcf] bg-[#fcfcfc] pl-[3px] text-[7.6px] leading-[13px] tracking-[-0.25px]">Toolpaths</span>
      </div>
      <PanelTools />
      <div className="h-px shrink-0 bg-[#d0d0d0]" />
      <Tree />
      <span className="absolute top-[262px] left-[207px] flex h-[26px] w-[7px] items-center justify-center border border-[#a9a9a9] bg-[#f3f3f3]">
        <span className="size-[3px] rounded-full border border-[#888]" />
      </span>
    </div>
  );
}

const pane: ReactNode[] = [
  <Art s={14}><path d="M3 8V15H13V8L8 3Z" fill="#fff" stroke="#444" /><path d="M0 9L8 1.500L16 9" fill="none" stroke="#23597a" strokeWidth="2.500" /><path d="M6.500 10H9.500V15H6.500Z" fill="#888" /></Art>,
  <Art s={13}><path d="M2 5L6 2L14 3V12L10 15L2 13Z" fill="#eee" stroke="#333" /><path d="M5 6V14M8 6V14M11 6V14" stroke="#333" strokeWidth="1.300" /></Art>,
  <Art s={13}><path d="M1 14V3H6L7 5H13V7M1 14L5 7H16L12 14Z" fill="#eee" stroke="#444" /></Art>,
  <Art s={13}><path d="M1 2H15V14H1Z" fill="#e2ca6a" stroke="#4b4526" /><path d="M3 5H13M5 13V9L8 7L11 9V13Z" stroke="#6a5a14" fill="#f6e77e" /></Art>,
  <Ball s={12} />,
  <ListIcon />,
  <Art s={13}><path d="M13 2L9 7M7 9L4 15" stroke="#222" strokeWidth="2.600" fill="none" /><path d="M3 2Q7 3 8 8Q9 13 12 14" stroke="#777" strokeWidth="1.500" fill="none" /></Art>,
  <Art s={13}><circle cx="8" cy="8" r="6" fill="#3b82be" stroke="#234" /><path d="M3 5Q8 2 9 7T13 11" stroke="#dff" strokeWidth="2" fill="none" /><path d="M1 11Q3 16 9 15M15 5Q13 0 7 1" stroke="#555" strokeWidth="1.500" fill="none" /></Art>,
  <Art s={13}><path d="M1 2H11V9H5L3 12V9H1Z" fill="#3d87ac" stroke="#1d4a62" /><path d="M6 6H15V12H13V15L10 12H6Z" fill="#e8f1f5" stroke="#1d4a62" /></Art>,
];

export default function App() {
  return (
    <div className="flex h-[720px] w-[1280px] flex-col overflow-hidden bg-[#f4f4f4] font-['Noto_Sans',sans-serif] text-[#222]">
      <Taskbar />
      <TitleBar />
      <ViewBar />
      <Ribbon />
      <div className="relative flex h-[580px] shrink-0 flex-col">
        <Scene />
        <TabRow />
        <div className="flex flex-1">
          <LeftPanel />
        </div>
        <div className="absolute top-[34px] right-0 w-[17px] border-t border-l border-[#8f8f8f]">
          {pane.map((p, i) => (
            <div key={i} className={`flex h-[16px] items-center justify-center border-b border-[#8f8f8f] ${i === 6 ? "bg-white" : "bg-[#d2d2d2]"}`}>
              {p}
            </div>
          ))}
        </div>
      </div>
      <div className="flex h-[11px] shrink-0 border-t border-[#9a9a9a] bg-[#f8f8f8] text-[8px] leading-[10px] whitespace-nowrap">
        <span className="ml-[18px] flex w-[43px] items-center justify-around border border-[#999] bg-[#b4b4b4] text-[5px] text-[#888]">
          <span>|◂</span><span>◂</span><span>▸</span><span>▸|</span>
        </span>
        <span className="w-[38px] text-center font-bold tracking-[-0.1px]">Model</span>
        <span className="w-[45px] border-x border-[#a9a9a9] bg-[#d6d6d6] text-center tracking-[-0.1px]">3D Views</span>
        <span className="w-[73px] border-r border-[#a9a9a9] bg-[#d6d6d6] pl-[6px] tracking-[-0.15px]">Motion Study 1</span>
      </div>
      <div className="flex h-[12px] shrink-0 items-center border-t border-[#c4c4c4] bg-[#e6e6e6] text-[8px] whitespace-nowrap">
        <span className="ml-px tracking-[-0.3px]">SOLIDWORKS Premium 2017 x64 Edition</span>
        <span className="ml-auto w-[58px] tracking-[-0.15px]">Fully Defined</span>
        <span className="w-[97px] tracking-[-0.15px]">Editing Assembly</span>
        <span className="w-[36px]">MMGS</span>
        <span className="inline-block border-x-[2px] border-b-[2.5px] border-x-transparent border-b-gray-800" />
        <span className="mr-[2px] ml-[48px] flex">
          <Art s={11}><path d="M1 6L8 2L15 6L8 10ZM1 9L8 13L15 9M1 6V10L8 15" fill="none" stroke="#444" strokeWidth="1.300" /></Art>
        </span>
      </div>
    </div>
  );
}
